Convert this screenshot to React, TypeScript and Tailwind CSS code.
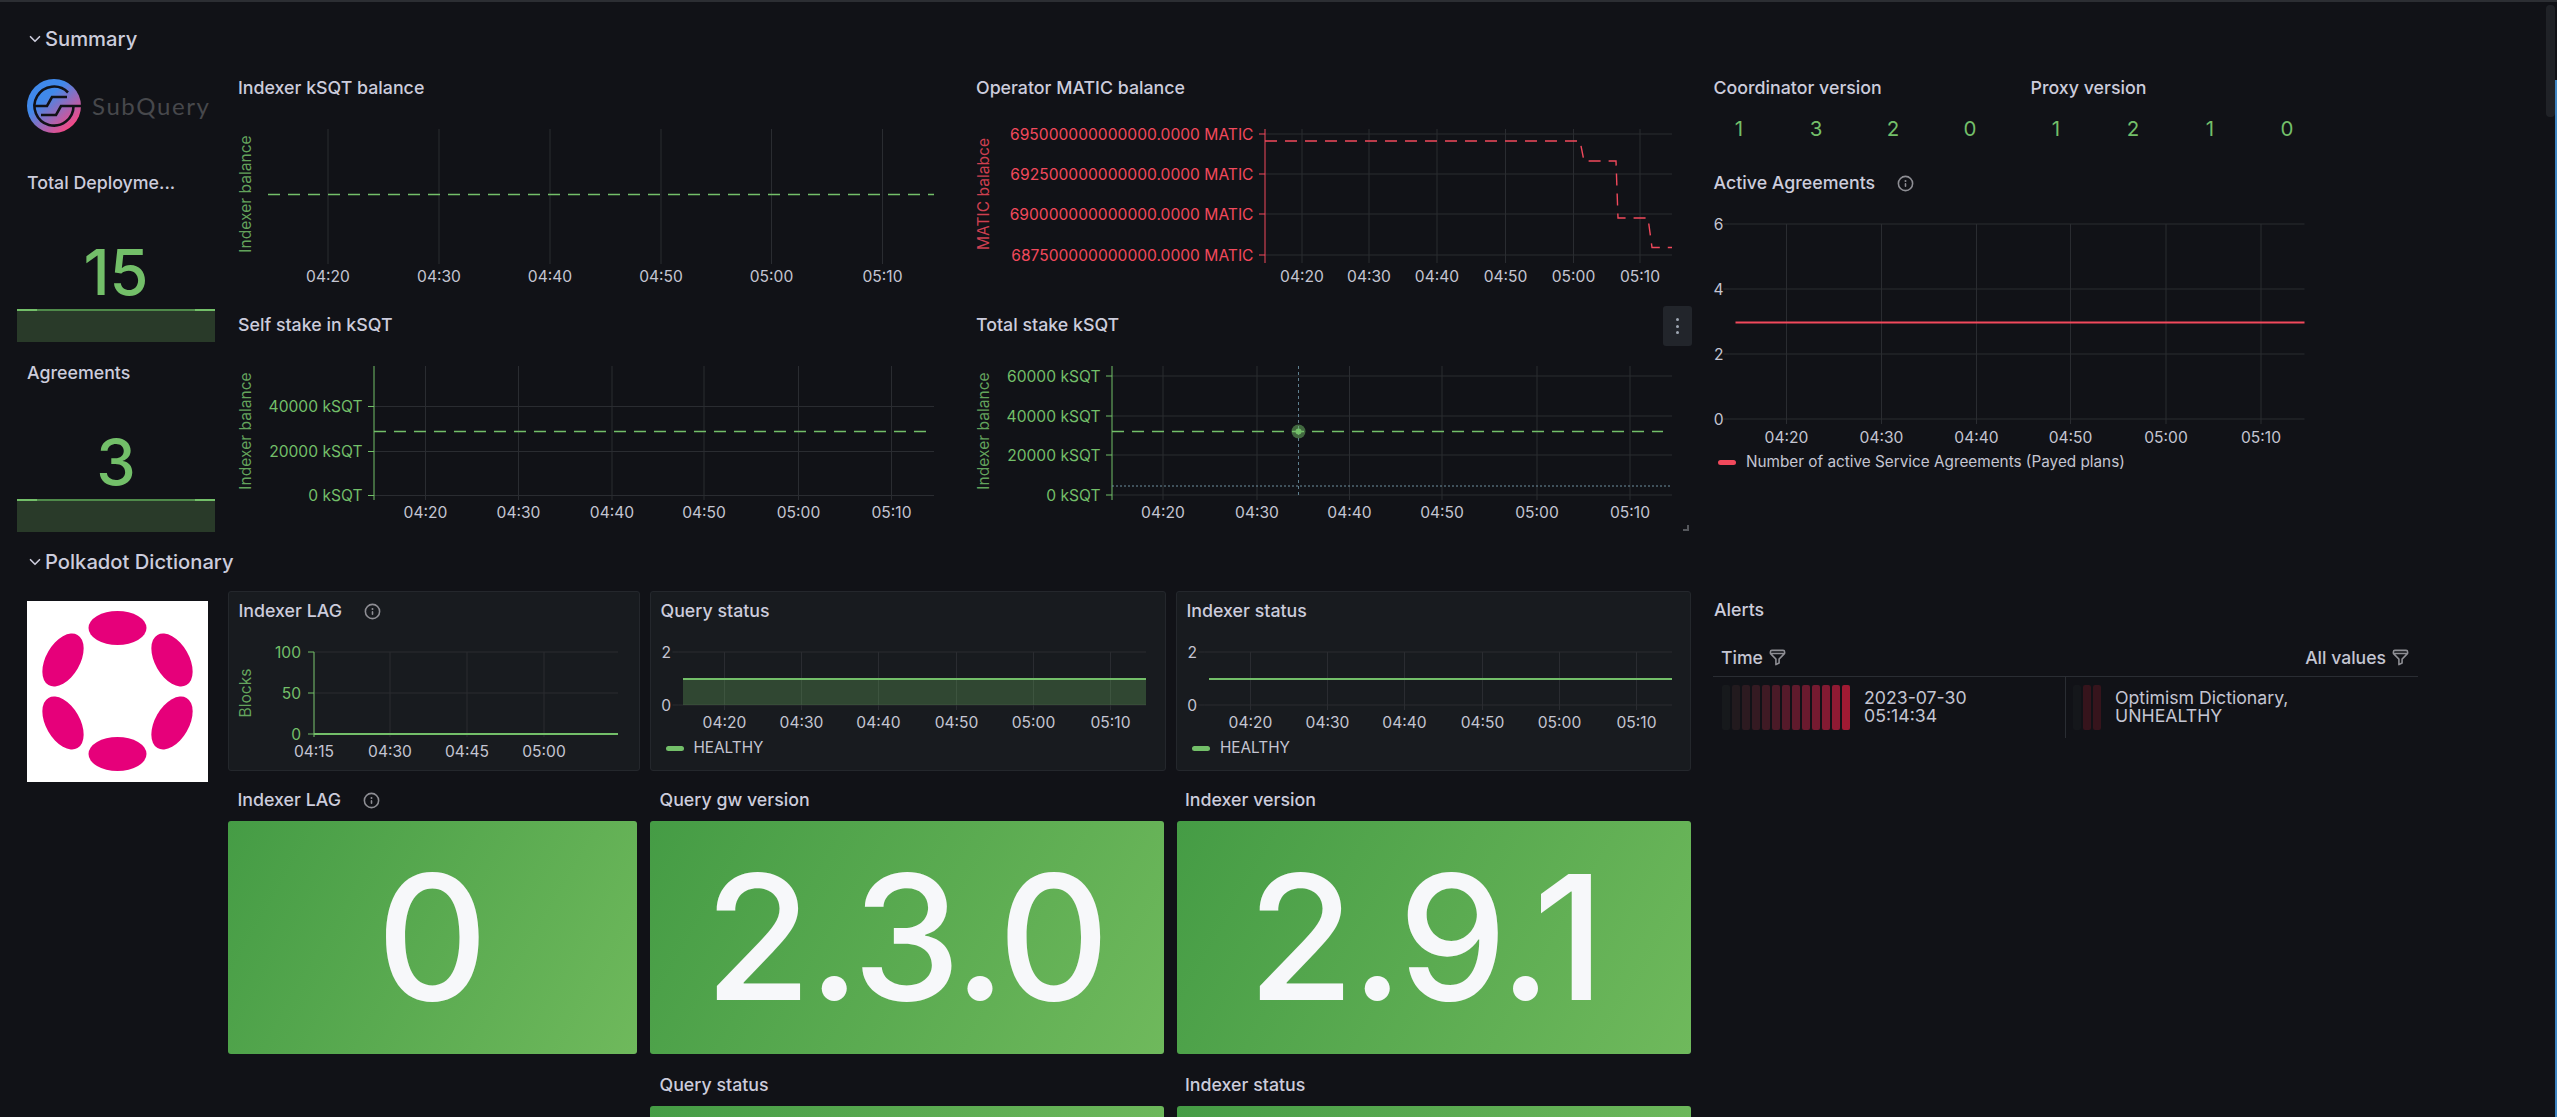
import type { ReactNode } from 'react';
import { ChevronDown } from 'lucide-react';

const GREEN = '#73bf69';
const RED = '#f2495c';
const GRID = '#2a2c31';
const LABEL = '#c4c5d2';

const TIMES = ['04:20', '04:30', '04:40', '04:50', '05:00', '05:10'];

const InfoIcon = () => (
  <svg viewBox="0 0 24 24" className="h-[19px] w-[19px] fill-[#8e8e94]">
    <path d="M12,2A10,10,0,1,0,22,12,10.01114,10.01114,0,0,0,12,2Zm0,18a8,8,0,1,1,8-8A8.00917,8.00917,0,0,1,12,20Zm0-8.5a1,1,0,0,0-1,1v3a1,1,0,0,0,2,0v-3A1,1,0,0,0,12,11.5Zm0-4a1.25,1.25,0,1,0,1.25,1.25A1.25,1.25,0,0,0,12,7.5Z" />
  </svg>
);

const FilterIcon = () => (
  <svg viewBox="0 0 24 24" className="h-[19px] w-[19px] fill-[#8e8e94]">
    <path d="M19,2H5A3,3,0,0,0,2,5V6.17a3,3,0,0,0,.25,1.2l0,.06a2.81,2.81,0,0,0,.59.86L9,14.41V21a1,1,0,0,0,.47.85A1,1,0,0,0,10,22a1,1,0,0,0,.45-.11l4-2A1,1,0,0,0,15,19V14.41l6.12-6.12a2.81,2.81,0,0,0,.59-.86l0-.06a3,3,0,0,0,.28-1.2V5A3,3,0,0,0,19,2ZM13.29,13.29A1,1,0,0,0,13,14v4.38l-2,1V14a1,1,0,0,0-.29-.71L5.41,8H18.59ZM20,6H4V5A1,1,0,0,1,5,4H19a1,1,0,0,1,1,1Z" />
  </svg>
);

const SubQueryMark = () => (
  <svg viewBox="0 0 54 54" className="h-[54px] w-[54px] shrink-0">
    <defs>
      <linearGradient id="sq" x1="0.15" y1="0.2" x2="0.8" y2="0.95">
        <stop offset="0.25" stopColor="#4089ea" />
        <stop offset="1" stopColor="#ff4580" />
      </linearGradient>
    </defs>
    <circle cx="27" cy="27" r="27" fill="url(#sq)" />
    <g fill="none" stroke="#111217" strokeWidth="2.6">
      <path d="M41 13.5A19.5 19.5 0 1 0 46.5 27" />
      <path d="M40 18H25L20 27H7.5" />
      <path d="M14 36H29L34 27H54" />
    </g>
  </svg>
);

const PolkadotLogo = () => (
  <svg viewBox="0 0 181 181" className="h-[181px] w-[181px] bg-white">
    <g fill="#e6007a">
      <ellipse cx="90.5" cy="27" rx="29" ry="17" />
      <ellipse cx="90.5" cy="153" rx="29" ry="17" />
      <ellipse cx="36" cy="59" rx="29" ry="17" transform="rotate(-60 36 59)" />
      <ellipse cx="145" cy="59" rx="29" ry="17" transform="rotate(60 145 59)" />
      <ellipse cx="36" cy="122" rx="29" ry="17" transform="rotate(60 36 122)" />
      <ellipse cx="145" cy="122" rx="29" ry="17" transform="rotate(-60 145 122)" />
    </g>
  </svg>
);

// the viewBox sits on the page's own coordinates, so values can be read straight off the screenshot
type PlotProps = {
  x: number;
  y: number;
  w: number;
  h: number;
  left: number;
  right: number;
  top: number;
  bottom: number;
  vx: number[];
  times?: string[];
  timeY: number;
  hy?: [number, string][];
  labelX?: number;
  labelColor?: string;
  axis?: string;
  yTitle?: { text: string; x: number; cy: number; color: string };
  children?: ReactNode;
};

function Plot({ x, y, w, h, left, right, top, bottom, vx, times = TIMES, timeY, hy = [], labelX = 0, labelColor = LABEL, axis, yTitle, children }: PlotProps) {
  return (
    <svg width={w} height={h} viewBox={`${x} ${y} ${w} ${h}`} className="block text-[15.6px]">
      {vx.map((v) => (
        <line key={v} x1={v} x2={v} y1={top} y2={bottom} stroke={GRID} />
      ))}
      {hy.map(([v, label]) => (
        <g key={label}>
          <line x1={left} x2={right} y1={v} y2={v} stroke={GRID} />
          <line x1={left - 6} x2={left} y1={v} y2={v} stroke={axis ?? GRID} />
          <text x={labelX} y={v} textAnchor="end" dominantBaseline="central" fill={labelColor}>
            {label}
          </text>
        </g>
      ))}
      {axis && <line x1={left} x2={left} y1={top} y2={bottom} stroke={axis} />}
      {times.map((t, i) => (
        <text key={t} x={vx[i]} y={timeY} textAnchor="middle" dominantBaseline="central" fill={LABEL}>
          {t}
        </text>
      ))}
      {yTitle && (
        <text
          transform={`translate(${yTitle.x} ${yTitle.cy}) rotate(-90)`}
          textAnchor="middle"
          dominantBaseline="central"
          fill={yTitle.color}
          fillOpacity={0.85}
        >
          {yTitle.text}
        </text>
      )}
      {children}
    </svg>
  );
}

const Dashed = ({ d, color }: { d: string; color: string }) => (
  <path d={d} fill="none" stroke={color} strokeWidth="1.4" strokeDasharray="12 8" />
);

const Title = ({ children, info, className = '' }: { children: ReactNode; info?: boolean; className?: string }) => (
  <div className={`flex h-[24px] items-center gap-[21px] text-[17.8px] font-medium whitespace-nowrap text-[#ccccdc] ${className}`}>
    <span>{children}</span>
    {info && <InfoIcon />}
  </div>
);

const RowHeader = ({ children, className }: { children: ReactNode; className: string }) => (
  <div className={`flex items-start pl-[26px] text-[20.2px] font-medium text-[#ccccdc] ${className}`}>
    <div className="flex h-[24px] items-center gap-[1px]">
      <ChevronDown size={18} strokeWidth={2.2} />
      <span>{children}</span>
    </div>
  </div>
);

function Stat({ title, value }: { title: string; value: string }) {
  return (
    <div className="flex h-[171px] w-[198px] flex-col">
      <Title className="pl-[10px]">{title}</Title>
      <div className="flex h-[114px] items-end justify-center pb-[5px] text-[63px] leading-[63px] font-medium text-[#73bf69]">{value}</div>
      <div className="h-[33px] bg-[#293a29]">
        <div className="flex h-[2px]">
          <div className="w-[20px] bg-[#73bf69]" />
          <div className="flex-1 bg-[#4f8a4a]" />
          <div className="w-[20px] bg-[#73bf69]" />
        </div>
      </div>
    </div>
  );
}

const Version = ({ title, digits, className }: { title: string; digits: string[]; className: string }) => (
  <div className={className}>
    <Title className="pl-[13px]">{title}</Title>
    <div className="mt-[9px] flex h-[40px] items-center text-[20.5px] text-[#73bf69]">
      {digits.map((d, i) => (
        <span key={i} className="w-[77px] text-center">
          {d}
        </span>
      ))}
    </div>
  </div>
);

const Legend = ({ color, label, className }: { color: string; label: string; className: string }) => (
  <div className={`flex h-[24px] items-center gap-[10px] text-[15.3px] text-[#c4c5d2] ${className}`}>
    <span className={`h-[5px] w-[18px] rounded-full ${color}`} />
    <span>{label}</span>
  </div>
);

const Panel = ({ title, info, children }: { title: string; info?: boolean; children: ReactNode }) => (
  <div className="h-[180px] overflow-hidden rounded-[3px] border border-[#24272c] bg-[#181b1f] pt-[7px]">
    <Title info={info} className="pl-[9.5px]">
      {title}
    </Title>
    {children}
  </div>
);

const BigStat = ({ value, className }: { value: string; className: string }) => (
  <div className={`mt-[9px] flex h-[233px] items-center justify-center rounded-[3px] bg-[linear-gradient(120deg,#459c45,#6fb95c)] text-[173px] leading-none font-medium tracking-[-3.5px] text-[#f7f8fa] ${className}`}>
    {value}
  </div>
);

const TIME_BARS = [
  'bg-[#17191c]', 'bg-[#221a1e]', 'bg-[#2c1a20]', 'bg-[#341a22]', 'bg-[#3f1a24]', 'bg-[#4a1a27]', 'bg-[#551a2a]',
  'bg-[#5f1a2c]', 'bg-[#6a1a2e]', 'bg-[#751a30]', 'bg-[#821a32]', 'bg-[#8f1a33]', 'bg-[#a01a33]',
];
const VALUE_BARS = ['bg-[#15171b]', 'bg-[#36141c]', 'bg-[#36141c]'];

function AlertCell({ bars, lines, className }: { bars: string[]; lines: string[]; className: string }) {
  return (
    <div className={`flex h-[61px] items-start gap-[14.5px] pt-[8px] ${className}`}>
      <div className="flex h-[45px] gap-[2px]">
        {bars.map((b, i) => (
          <span key={i} className={`h-full w-[8px] rounded-[2px] ${b}`} />
        ))}
      </div>
      <div className="pt-[4px] text-[17.7px] leading-[18px] text-[#c4c5d2]">
        {lines.map((l) => (
          <div key={l}>{l}</div>
        ))}
      </div>
    </div>
  );
}

export default function App() {
  return (
    <div className="relative h-[1117px] w-full overflow-hidden border-t-2 border-[#2c2e33] bg-[#111217] font-['Inter',sans-serif]">
      <RowHeader className="h-[74px] pt-[25px]">Summary</RowHeader>

      <div className="flex h-[469px] pl-[17px]">
        <div className="mr-[13px] w-[198px]">
          <div className="flex h-[95px] items-start gap-[11px] pt-[3px] pl-[10px]">
            <SubQueryMark />
            <span className="pt-[12px] font-['Lato',sans-serif] text-[24px] leading-[30px] tracking-[1.6px] text-[#47484c]">SubQuery</span>
          </div>
          <Stat title="Total Deployme..." value="15" />
          <div className="mt-[19px]">
            <Stat title="Agreements" value="3" />
          </div>
        </div>

        <div className="w-[738px]">
          <Title className="pl-[10px]">Indexer kSQT balance</Title>
          <Plot
            x={228} y={100} w={738} h={213} left={268} right={934} top={129} bottom={264}
            vx={[328, 439, 550, 661, 771.5, 882.5]} timeY={276}
            yTitle={{ text: 'Indexer balance', x: 245, cy: 194, color: GREEN }}
          >
            <Dashed d="M268 194.5H934" color={GREEN} />
          </Plot>
          <Title className="pl-[10px]">Self stake in kSQT</Title>
          <Plot
            x={228} y={337} w={738} h={208} left={374} right={934} top={366} bottom={500}
            vx={[425.5, 518.5, 612, 704, 798.5, 891.5]} timeY={512.5}
            hy={[[406.5, '40000 kSQT'], [451.5, '20000 kSQT'], [495.5, '0 kSQT']]}
            labelX={362.5} labelColor={GREEN} axis={GREEN}
            yTitle={{ text: 'Indexer balance', x: 245, cy: 431, color: GREEN }}
          >
            <Dashed d="M374 431.5H926" color={GREEN} />
          </Plot>
        </div>

        <div className="relative w-[734.5px]">
          <Title className="pl-[10px]">Operator MATIC balance</Title>
          <Plot
            x={966} y={100} w={734} h={213} left={1265} right={1672} top={129} bottom={263}
            vx={[1302, 1369, 1437, 1505.5, 1573.5, 1640]} timeY={276}
            hy={[[134, '695000000000000.0000 MATIC'], [174, '692500000000000.0000 MATIC'], [214, '690000000000000.0000 MATIC'], [255, '687500000000000.0000 MATIC']]}
            labelX={1253.5} labelColor={RED} axis={RED}
            yTitle={{ text: 'MATIC balabce', x: 983, cy: 194, color: RED }}
          >
            <Dashed d="M1265 141H1580L1584 161H1616L1618 218H1648L1652 247.5H1672" color={RED} />
          </Plot>
          <Title className="pl-[10px]">Total stake kSQT</Title>
          <Plot
            x={966} y={337} w={734} h={208} left={1112} right={1672} top={366} bottom={500}
            vx={[1163, 1257, 1349.5, 1442, 1537, 1630]} timeY={512.5}
            hy={[[376, '60000 kSQT'], [416, '40000 kSQT'], [455, '20000 kSQT'], [495, '0 kSQT']]}
            labelX={1100.5} labelColor={GREEN} axis={GREEN}
            yTitle={{ text: 'Indexer balance', x: 983, cy: 431, color: GREEN }}
          >
            <Dashed d="M1112 431.5H1663" color={GREEN} />
            <path d="M1298.5 366V496" stroke="#5f7f8f" strokeDasharray="3 3" />
            <path d="M1112 486H1672" stroke="#6f8fa0" strokeDasharray="2 2" />
            <circle cx="1298.5" cy="431.5" r="7" fill={GREEN} fillOpacity="0.5" />
            <circle cx="1298.5" cy="431.5" r="3" fill={GREEN} />
          </Plot>
          {/* hover menu and resize handle of the panel under the cursor */}
          <div className="absolute top-[230px] left-[697px] flex h-[40px] w-[29px] flex-col items-center justify-center gap-[3.5px] rounded-[3px] bg-[#22252b]">
            <span className="h-[3px] w-[3px] rounded-full bg-[#9fa7b3]" />
            <span className="h-[3px] w-[3px] rounded-full bg-[#9fa7b3]" />
            <span className="h-[3px] w-[3px] rounded-full bg-[#9fa7b3]" />
          </div>
          <div className="absolute top-[449px] left-[717px] h-[6px] w-[6px] border-r-2 border-b-2 border-[#55575c]" />
        </div>

        <div className="w-[700px]">
          <div className="flex">
            <Version title="Coordinator version" digits={['1', '3', '2', '0']} className="mr-[9px]" />
            <Version title="Proxy version" digits={['1', '2', '1', '0']} className="" />
          </div>
          <Title info className="mt-[22px] pl-[13px]">
            Active Agreements
          </Title>
          <Plot
            x={1700.5} y={195} w={620} h={255} left={1729} right={2304} top={224} bottom={424}
            vx={[1786, 1881, 1976, 2070, 2165.5, 2260.5]} timeY={437}
            hy={[[224, '6'], [289, '4'], [354, '2'], [419, '0']]} labelX={1723}
          >
            <path d="M1735 322.5H2304" stroke={RED} strokeWidth="2" />
          </Plot>
          <Legend color="bg-[#f2495c]" label="Number of active Service Agreements (Payed plans)" className="pl-[17.5px]" />
        </div>
      </div>

      <RowHeader className="h-[46px] pt-[5px]">Polkadot Dictionary</RowHeader>

      <div className="flex pl-[17px]">
        <div className="mr-[13px] w-[198px] pt-[10px] pl-[10px]">
          <PolkadotLogo />
        </div>

        <div className="grid w-[1463px] grid-cols-[412px_516px_515px] gap-x-[10px]">
          <Panel title="Indexer LAG" info>
            <Plot
              x={229} y={623} w={410} h={146} left={314} right={618} top={652} bottom={737}
              vx={[314, 390, 467, 544]} times={['04:15', '04:30', '04:45', '05:00']} timeY={751}
              hy={[[652, '100'], [693, '50'], [734, '0']]} labelX={301} labelColor={GREEN} axis={GREEN}
              yTitle={{ text: 'Blocks', x: 245, cy: 693, color: GREEN }}
            >
              <path d="M314 734H618" stroke={GREEN} strokeWidth="2" />
            </Plot>
          </Panel>
          <Panel title="Query status">
            <Plot
              x={651} y={623} w={514} h={113} left={678.5} right={1146} top={652} bottom={710}
              vx={[724.5, 801.5, 878.5, 956.5, 1033.5, 1110.5]} timeY={722.5}
              hy={[[652, '2'], [705, '0']]} labelX={671}
            >
              <rect x={683} y={679} width={463} height={26} fill={GREEN} fillOpacity="0.27" />
              <path d="M683 679H1146" stroke={GREEN} strokeWidth="2" />
            </Plot>
            <Legend color="bg-[#73bf69]" label="HEALTHY" className="pl-[14.5px]" />
          </Panel>
          <Panel title="Indexer status">
            <Plot
              x={1177} y={623} w={513} h={113} left={1204.5} right={1672} top={652} bottom={710}
              vx={[1250.5, 1327.5, 1404.5, 1482.5, 1559.5, 1636.5]} timeY={722.5}
              hy={[[652, '2'], [705, '0']]} labelX={1197}
            >
              <path d="M1209 679H1672" stroke={GREEN} strokeWidth="2" />
            </Plot>
            <Legend color="bg-[#73bf69]" label="HEALTHY" className="pl-[15px]" />
          </Panel>

          <div className="mt-[17px]">
            <Title info className="pl-[9.5px]">Indexer LAG</Title>
            <BigStat value="0" className="w-[409px] pr-[4px]" />
          </div>
          <div className="mt-[17px]">
            <Title className="pl-[9.5px]">Query gw version</Title>
            <BigStat value="2.3.0" className="w-[514px] pr-[3px]" />
          </div>
          <div className="mt-[17px]">
            <Title className="pl-[9px]">Indexer version</Title>
            <div className="pl-[0.5px]">
              <BigStat value="2.9.1" className="w-[514px] pr-[18px]" />
            </div>
          </div>

          <div />
          <div className="mt-[19px]">
            <Title className="pl-[9.5px]">Query status</Title>
            <div className="mt-[9px] h-[60px] w-[514px] rounded-[3px] bg-[linear-gradient(120deg,#459c45,#6fb95c)]" />
          </div>
          <div className="mt-[19px]">
            <Title className="pl-[9px]">Indexer status</Title>
            <div className="mt-[9px] ml-[0.5px] h-[60px] w-[514px] rounded-[3px] bg-[linear-gradient(120deg,#459c45,#6fb95c)]" />
          </div>
        </div>

        <div className="ml-[22px] w-[705px]">
          <Title className="mt-[7px] pl-[1px]">Alerts</Title>
          <div className="mt-[18px] flex h-[37px] items-center justify-between border-b border-[#2a2d33] px-[8px] text-[17.6px] font-medium text-[#c4c5d2]">
            <span className="flex items-center gap-[5px]">
              Time
              <FilterIcon />
            </span>
            <span className="flex items-center gap-[5px]">
              All values
              <FilterIcon />
            </span>
          </div>
          <div className="flex">
            <AlertCell bars={TIME_BARS} lines={['2023-07-30', '05:14:34']} className="w-[353px] border-r border-[#2a2d33] pl-[8.5px]" />
            <AlertCell bars={VALUE_BARS} lines={['Optimism Dictionary,', 'UNHEALTHY']} className="pl-[6.5px]" />
          </div>
        </div>
      </div>

      {/* page scrollbar */}
      <div className="absolute top-[3px] right-[2px] h-[112px] w-[9px] rounded-[4px] bg-[#202227]" />
      <div className="absolute top-[78px] right-0 bottom-0 w-[2px] bg-[#3f86c4]" />
    </div>
  );
}
